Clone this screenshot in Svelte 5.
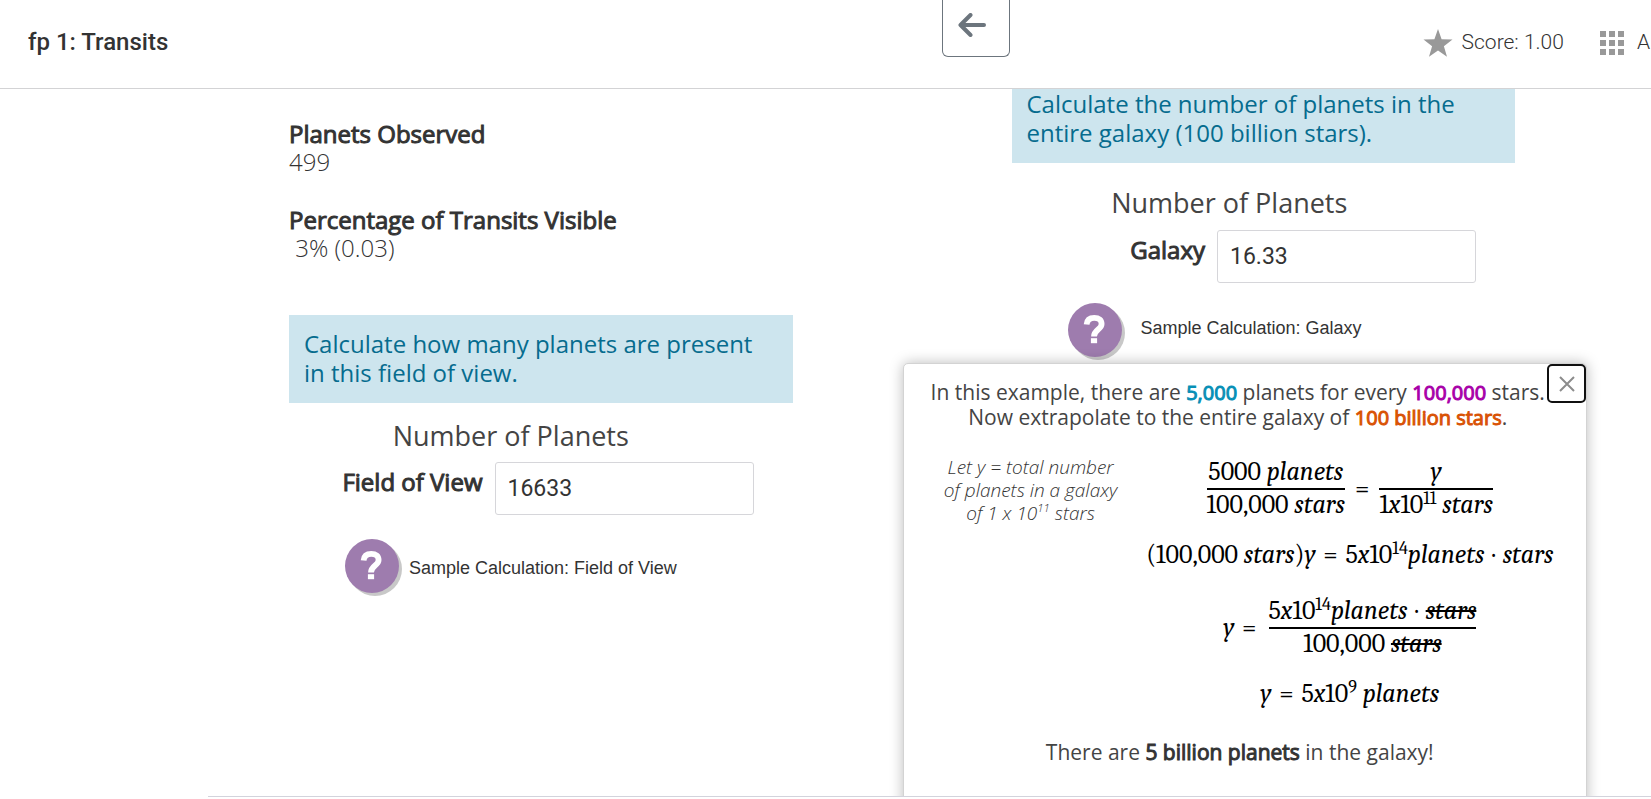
<script>
  let fieldOfView = $state('16633');
  let galaxy = $state('16.33');
  let showSample = $state(true);
</script>

{#snippet help()}
  <svg class="help-icon" viewBox="0 0 58 58" aria-hidden="true">
    <circle cx="30" cy="30" r="27" fill="#c8c8c8" />
    <circle cx="27" cy="27" r="27" fill="#9e7cae" />
    <path d="M18.600 21.500C19 17 21.800 14.900 26.300 14.900c4.700 0 7.300 2.300 7.300 6.100 0 5.500-7.600 5.800-7.600 12.500" fill="none" stroke="#fff" stroke-width="5.800" />
    <rect x="22.900" y="35.200" width="6.200" height="5" fill="#fff" />
  </svg>
{/snippet}

<div class="app">
  <header>
    <h1>fp 1: Transits</h1>
    <button class="back" aria-label="Back">
      <svg viewBox="0 0 28 24" aria-hidden="true">
        <path d="M12.500 2 2.500 12l10 10M3 12h23" fill="none" stroke="#6c757d" stroke-width="4" stroke-linecap="round" stroke-linejoin="round" />
      </svg>
    </button>
    <div class="tools">
      <svg class="star" viewBox="0 0 30 28" aria-hidden="true">
        <path d="M15 0l3.600 10.300L29.500 10.500l-8.600 6.700 3.100 10.600L15 21.500 6 27.800l3.100-10.600L.5 10.500l10.900-.2z" fill="#999" />
      </svg>
      <span class="score">Score: 1.00</span>
      <a class="activities" href="#activities">
        <svg class="grid-icon" viewBox="0 0 24 24" aria-hidden="true">
          <path d="M0 0h6v6H0zM9 0h6v6H9zM18 0h6v6h-6zM0 9h6v6H0zM9 9h6v6H9zM18 9h6v6h-6zM0 18h6v6H0zM9 18h6v6H9zM18 18h6v6h-6z" fill="#999" />
        </svg>
        <span>A</span>
      </a>
    </div>
  </header>

  <main>
    <section class="column left">
      <dl>
        <dt>Planets Observed</dt>
        <dd>499</dd>
        <dt>Percentage of Transits Visible</dt>
        <dd>&nbsp;3% (0.03)</dd>
      </dl>
      <p class="callout">Calculate how many planets are present in this field of view.</p>
      <h2>Number of Planets</h2>
      <div class="field">
        <label for="fov">Field of View</label>
        <input id="fov" type="text" bind:value={fieldOfView} />
      </div>
      <button class="help">{@render help()}<span>Sample Calculation: Field of View</span></button>
    </section>

    <section class="column right">
      <p class="callout">Calculate the number of planets in the entire galaxy (100 billion stars).</p>
      <h2>Number of Planets</h2>
      <div class="field">
        <label for="galaxy">Galaxy</label>
        <input id="galaxy" type="text" bind:value={galaxy} />
      </div>
      <button class="help" onclick={() => (showSample = true)}>{@render help()}<span>Sample Calculation: Galaxy</span></button>

      {#if showSample}
        <div class="popup" role="dialog" aria-label="Sample Calculation: Galaxy">
          <button class="close" aria-label="Close" onclick={() => (showSample = false)}>
            <svg viewBox="0 0 16 16" aria-hidden="true"><path d="M1 1l14 14M15 1 1 15" fill="none" stroke="#8c8c8c" stroke-width="2" /></svg>
          </button>
          <p class="intro">
            In this example, there are <b class="blue">5,000</b> planets for every <b class="purple">100,000</b> stars.<br />
            Now extrapolate to the entire galaxy of <b class="orange">100 billion stars</b>.
          </p>
          <div class="work">
            <p class="note">Let y = total number<br />of planets in a galaxy<br />of 1 x 10<sup>11</sup> stars</p>
            <div class="math">
              <div class="equation">
                <span class="fraction"><span>5000 <i>planets</i></span><span>100,000 <i>stars</i></span></span>
                <span>=</span>
                <span class="fraction"><span><i>y</i></span><span>1<i>x</i>10<sup>11</sup> <i>stars</i></span></span>
              </div>
              <div class="equation line"><span>(100,000 <i>stars</i>)<i>y</i> <span class="op">=</span> 5<i>x</i>10<sup>14</sup><i>planets</i> <span class="op">·</span> <i>stars</i></span></div>
              <div class="equation">
                <span><i>y</i> <span class="op">=</span></span>
                <span class="fraction"><span>5<i>x</i>10<sup>14</sup><i>planets</i> <span class="op">·</span> <s>stars</s></span><span>100,000 <s>stars</s></span></span>
              </div>
              <div class="equation line"><span><i>y</i> <span class="op">=</span> 5<i>x</i>10<sup>9</sup> <i>planets</i></span></div>
            </div>
          </div>
          <p class="result">There are <b>5 billion planets</b> in the galaxy!</p>
        </div>
      {/if}
    </section>
  </main>
</div>

<style>
  :global(body) { background: #fff; overflow: hidden; }
  * { box-sizing: border-box; }
  .app {
    height: 100vh;
    display: flex;
    flex-direction: column;
    padding-bottom: 2px;
    overflow: hidden;
    color: #333;
    font-family: "Open Sans", sans-serif;
    font-weight: 300;
    font-size: 24px;
    line-height: 29px;
  }
  h1, h2, p, dl, dd { margin: 0; }
  button { padding: 0; background: none; font: inherit; color: inherit; cursor: pointer; }
  svg { display: block; flex: none; }

  header {
    position: relative;
    z-index: 2;
    flex: none;
    height: 89px;
    display: grid;
    grid-template-columns: 942px 68px 1fr;
    background: #fff;
    border-bottom: 1px solid #d3d3d5;
    font-family: Roboto, sans-serif;
  }
  h1 { padding: 27px 28px; font-size: 24px; font-weight: 500; line-height: 30px; }
  .back {
    height: 57px;
    display: flex;
    align-items: center;
    padding: 0 0 6px 15px;
    border: 1px solid #6c757d;
    border-top: 0;
    border-radius: 0 0 6px 6px;
  }
  .back svg { width: 28px; height: 24px; }
  .tools { display: flex; align-items: center; justify-content: flex-end; padding: 0 1px 3px 0; font-size: 21px; font-weight: 300; color: #333; overflow: hidden; }
  .star { width: 30px; height: 28px; margin-right: 9px; }
  .score { margin-right: 36px; white-space: nowrap; }
  .activities { display: flex; align-items: center; gap: 13px; color: inherit; text-decoration: none; }
  .grid-icon { width: 24px; height: 24px; }

  main {
    flex: 1;
    min-height: 0;
    margin-left: 208px;
    display: grid;
    grid-template-columns: 1fr 1fr;
    overflow: hidden;
    border-bottom: 1px solid #d3d3dc;
  }
  .column { position: relative; padding: 31px 137px 0 81px; min-width: 0; }
  .column.right { margin-top: -14px; padding: 0 136px 0 82px; }

  dl { padding-bottom: 23px; line-height: 28px; }
  dt, label { font-weight: 400; -webkit-text-stroke: 1px currentColor; }
  dd { margin-bottom: 30px; }
  .callout { padding: 14px 15px 16px; background: #cde5ee; color: #066c8e; font-weight: 400; }
  h2 { padding: 13px 60px 1px 0; color: #444; font-size: 27px; font-weight: 400; line-height: 40px; text-align: center; }
  .right h2 { padding: 20px 68px 2px 0; }

  .field { display: flex; justify-content: flex-end; gap: 12px; margin: 5px 39px 0 0; }
  label { line-height: 40px; white-space: nowrap; }
  input {
    width: 259px;
    height: 53px;
    padding: 0 12px;
    border: 1px solid #d6d6da;
    border-radius: 3px;
    background: #fff;
    color: #333;
    font: 400 23px/29px Roboto, sans-serif;
  }
  .help { display: flex; align-items: center; gap: 6px; margin: 24px 0 0 56px; border: 0; font: 400 18px/24px "Liberation Sans", Arial, sans-serif; }
  .right .help { align-items: flex-start; gap: 15px; margin-top: 20px; }
  .right .help span { padding-top: 13px; }
  .help-icon { width: 58px; height: 58px; }

  .popup {
    position: absolute;
    top: 288px;
    left: -27px;
    right: 64px;
    height: 480px;
    padding: 16px 12px;
    background: #fff;
    border: 1px solid #d3d3d3;
    border-radius: 5px;
    box-shadow: 0 0 14px #0004;
    color: #444;
    font-size: 21px;
    font-weight: 400;
    line-height: 25px;
    text-align: center;
  }
  .popup b { color: #333; font-weight: 400; -webkit-text-stroke: 1px currentColor; }
  .intro b { font-size: 20px; }
  .popup .blue { color: #078fb6; }
  .popup .purple { color: #a800a8; }
  .popup .orange { color: #d95204; }
  .close {
    position: absolute;
    top: 0;
    right: 0;
    width: 39px;
    height: 39px;
    display: flex;
    align-items: center;
    justify-content: center;
    background: #fff;
    border: 2px solid #101010;
    border-radius: 5px;
  }
  .close svg { width: 16px; height: 16px; }
  .intro { padding-right: 14px; white-space: nowrap; }
  .work { display: grid; grid-template-columns: 230px 1fr; padding-top: 26px; }
  .note { color: #333; font-size: 19px; font-style: italic; font-weight: 300; line-height: 23px; white-space: nowrap; }
  sup { font-size: 0.7em; line-height: 0; vertical-align: 9px; }
  .note sup { font-size: 0.6em; vertical-align: 8px; }
  .math { display: flex; flex-direction: column; padding: 1px 20px 0 0; color: #000; font-family: Cambria, Caladea, "Liberation Serif", serif; font-weight: 400; font-size: 26px; line-height: 31px; white-space: nowrap; }
  .equation { display: flex; align-items: center; justify-content: center; gap: 10px; height: 64px; }
  .equation.line { height: 75px; padding-bottom: 6px; }
  .op { margin: 0 2px; }
  .fraction { display: flex; flex-direction: column; }
  .fraction > span:first-child { border-bottom: 2px solid #000; }
  s { font-style: italic; }
  .result { padding: 5px 10px 0 0; }
</style>
